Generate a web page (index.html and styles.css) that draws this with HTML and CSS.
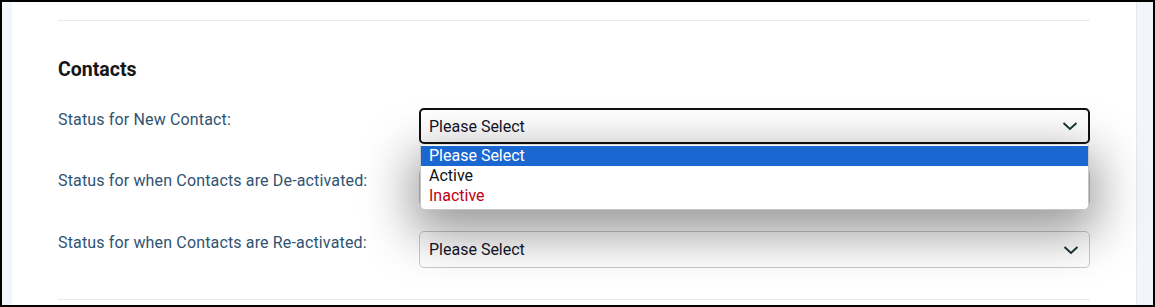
FILE: index.html
```html
<!DOCTYPE html>
<html>
<head>
<meta charset="utf-8">
<link rel="stylesheet" href="styles.css">
</head>
<body>
<div class="frame">
  <div class="side-left"></div>
  <main class="main">
    <hr class="divider">
    <h2 class="heading">Contacts</h2>
    <div class="form">
      <div class="label">Status for New Contact:</div>
      <div class="field">
        <div class="select open">
          <span>Please Select</span>
          <svg class="chev" width="16" height="10" viewBox="0 0 16 10"><polyline points="1.5,2 8,8 14.5,2" fill="none" stroke="#17383a" stroke-width="2"/></svg>
        </div>
        <ul class="popup">
          <li class="opt selected">Please Select</li>
          <li class="opt">Active</li>
          <li class="opt red">Inactive</li>
        </ul>
      </div>
      <div class="label">Status for when Contacts are De-activated:</div>
      <div class="field">
        <div class="select">
          <span>Please Select</span>
          <svg class="chev" width="16" height="10" viewBox="0 0 16 10"><polyline points="1.5,2 8,8 14.5,2" fill="none" stroke="#17383a" stroke-width="2"/></svg>
        </div>
      </div>
      <div class="label">Status for when Contacts are Re-activated:</div>
      <div class="field">
        <div class="select">
          <span>Please Select</span>
          <svg class="chev" width="16" height="10" viewBox="0 0 16 10"><polyline points="1.5,2 8,8 14.5,2" fill="none" stroke="#17383a" stroke-width="2"/></svg>
        </div>
      </div>
    </div>
    <hr class="divider bottom">
  </main>
  <div class="side-right"></div>
</div>
</body>
</html>
```
FILE: styles.css
```css
* { box-sizing: border-box; }
html, body { margin: 0; padding: 0; background: #fff; }
body { font-family: Roboto, "Liberation Sans", sans-serif; }
.frame {
  width: 1155px;
  height: 307px;
  border: 2px solid #000;
  display: flex;
  overflow: hidden;
}
.side-left { width: 10px; background: #f2f6fa; }
.side-right { width: 17px; background: #f2f6fa; border-left: 1px solid #e3e8ee; }
.main { flex: 1; padding: 0 46px; }
.divider { border: 0; border-top: 1px solid #e6e9ee; margin: 18px 0 0; height: 0; }
.divider.bottom { margin-top: 31px; }
.heading {
  margin: 37px 0 0;
  font-size: 19.5px;
  line-height: 23px;
  font-weight: 700;
  color: #161616;
}
.form {
  display: grid;
  grid-template-columns: 361px 1fr;
  row-gap: 25px;
  margin-top: 27px;
}
.label {
  font-size: 16px;
  letter-spacing: 0.15px;
  line-height: 20px;
  color: #2f5372;
  padding-top: 2px;
}
.field { position: relative; }
.select {
  height: 37px;
  border: 1px solid #c4cad1;
  border-radius: 5px;
  background: #fff;
  display: flex;
  align-items: center;
  justify-content: space-between;
  padding: 0 10px 0 9px;
  font-size: 16px;
  color: #14142a;
}
.select.open { border: 2px solid #111; height: 36px; padding-left: 8px; }
.chev { display: block; }
.popup {
  position: absolute;
  left: 1px;
  right: 1px;
  top: 37px;
  margin: 0;
  padding: 1px 0 3px;
  list-style: none;
  background: #fff;
  border: 1px solid #c6c6c6;
  border-top: 0;
  border-radius: 0 0 5px 5px;
  box-shadow: 0 16px 50px 8px rgba(0,0,0,0.4);
  z-index: 2;
}
.opt {
  height: 20px;
  line-height: 19px;
  padding-left: 8px;
  font-size: 16px;
  color: #111;
}
.opt.selected { background: #1a67d2; color: #fff; }
.opt.red { color: #c00014; }
```
